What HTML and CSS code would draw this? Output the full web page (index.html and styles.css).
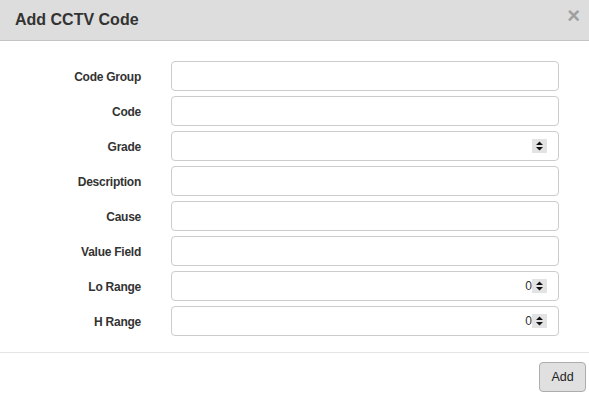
FILE: index.html
```html
<!DOCTYPE html>
<html>
<head>
<meta charset="utf-8">
<link rel="stylesheet" href="styles.css">
</head>
<body>
<div class="modal">
  <div class="modal-header">
    <h4 class="title">Add CCTV Code</h4>
    <span class="close">&times;</span>
  </div>
  <div class="modal-body">
    <div class="row"><label class="lbl">Code Group</label><input class="ctl" type="text"></div>
    <div class="row"><label class="lbl">Code</label><input class="ctl" type="text"></div>
    <div class="row"><label class="lbl">Grade</label><div class="ctl num"><input class="num-in" type="text" value=""><span class="spin"><svg width="15" height="14" viewBox="0 0 15 14"><path d="M4 6h7l-3.5-3.5z M4 8h7l-3.5 3.5z" fill="#111"/></svg></span></div></div>
    <div class="row"><label class="lbl">Description</label><input class="ctl" type="text"></div>
    <div class="row"><label class="lbl">Cause</label><input class="ctl" type="text"></div>
    <div class="row"><label class="lbl">Value Field</label><input class="ctl" type="text"></div>
    <div class="row"><label class="lbl">Lo Range</label><div class="ctl num"><input class="num-in" type="text" value="0"><span class="spin"><svg width="15" height="14" viewBox="0 0 15 14"><path d="M4 6h7l-3.5-3.5z M4 8h7l-3.5 3.5z" fill="#111"/></svg></span></div></div>
    <div class="row"><label class="lbl">H Range</label><div class="ctl num"><input class="num-in" type="text" value="0"><span class="spin"><svg width="15" height="14" viewBox="0 0 15 14"><path d="M4 6h7l-3.5-3.5z M4 8h7l-3.5 3.5z" fill="#111"/></svg></span></div></div>
  </div>
  <div class="modal-footer">
    <button class="btn">Add</button>
  </div>
</div>
</body>
</html>
```
FILE: styles.css
```css
html, body {
  margin: 0;
  padding: 0;
  background: #fff;
  font-family: "Liberation Sans", Arial, sans-serif;
  color: #333;
}
.modal {
  width: 589px;
  height: 397px;
  display: flex;
  flex-direction: column;
}
.modal-header {
  height: 40px;
  background: #dddddd;
  border-bottom: 1px solid #c4c4c4;
  display: flex;
  align-items: center;
  justify-content: space-between;
  padding: 0 9px 0 15px;
  box-sizing: content-box;
}
.title {
  margin: 0;
  font-size: 16px;
  font-weight: bold;
  color: #333;
  line-height: 20px;
}
.close {
  font-size: 22px;
  font-weight: bold;
  color: #a0a0a0;
  line-height: 1;
  margin-top: -9px;
}
.modal-body {
  padding: 20px 31px 0 0;
  display: flex;
  flex-direction: column;
  gap: 5px;
  border-bottom: 1px solid #e5e5e5;
  padding-bottom: 16px;
}
.row {
  display: grid;
  grid-template-columns: 141px 388px;
  column-gap: 30px;
  align-items: center;
}
.lbl {
  text-align: right;
  font-size: 12px;
  font-weight: bold;
  letter-spacing: -0.25px;
  color: #333;
  padding-top: 1px;
}
.ctl {
  box-sizing: border-box;
  width: 388px;
  height: 30px;
  border: 1px solid #cccccc;
  border-radius: 4px;
  background: #fff;
  font-family: "Liberation Sans", Arial, sans-serif;
  font-size: 12px;
  margin: 0;
  padding: 0 10px;
  outline: none;
}
.num {
  display: flex;
  align-items: center;
  padding: 0 11px 0 0;
}
.num-in {
  flex: 1;
  min-width: 0;
  border: 0;
  outline: none;
  text-align: right;
  font-family: "Liberation Sans", Arial, sans-serif;
  font-size: 12px;
  color: #333;
  padding: 0 0 0 0;
  background: transparent;
}
.spin {
  width: 15px;
  height: 14px;
  background: #e3e3e3;
  display: block;
}
.spin svg { display: block; }
.modal-footer {
  display: flex;
  justify-content: flex-end;
  padding: 9px 3px 0 0;
}
.btn {
  width: 47px;
  height: 30px;
  border: 1px solid #adadad;
  border-radius: 4px;
  background: #e0e0e0;
  font-family: "Liberation Sans", Arial, sans-serif;
  font-size: 12.5px;
  color: #222;
  padding: 0;
}
```
